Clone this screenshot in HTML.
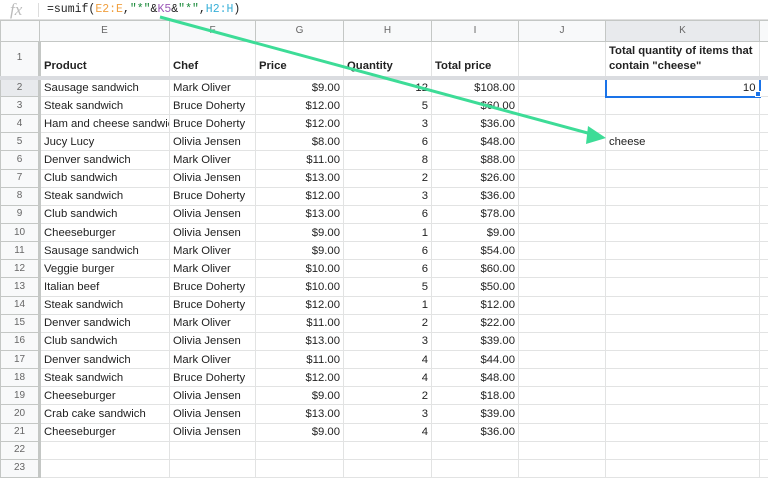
<!DOCTYPE html>
<html><head><meta charset="utf-8"><style>
*{margin:0;padding:0;box-sizing:border-box}
body{width:768px;height:472px;overflow:hidden;background:#fff;font-family:"Liberation Sans",Arial,sans-serif;font-size:11.3px;color:#222;position:relative}
.fb{position:absolute;left:0;top:0;width:768px;height:20px;border-bottom:1px solid #e0e0e0;background:#fff}
.fx{position:absolute;left:10px;top:0;font-family:"Liberation Serif",serif;font-style:italic;color:#bbb;font-size:17px}
.fsep{position:absolute;left:38px;top:3px;width:1px;height:14px;background:#ddd}
.ftxt{position:absolute;left:47px;top:3px;font-family:"Liberation Mono",monospace;font-size:11.5px;color:#222}
table{position:absolute;left:0;top:20px;border-collapse:collapse;table-layout:fixed;width:789px}
td{border:1px solid #e2e3e3;padding:0 3px;white-space:nowrap;overflow:hidden;height:18.15px;line-height:16px}
td.rn{background:#f8f9fa;color:#666;text-align:center;font-size:10px;border-right:3px solid #c4c7c5;border-color:#c4c7c5}
tr.hd td{background:#f8f9fa;color:#666;text-align:center;font-size:10px;height:21px;border-color:#c4c7c5}
tr.r1 td{height:36px;vertical-align:bottom;font-weight:bold;padding-bottom:2px;line-height:15px;border-bottom:4px solid #dadce0}
.r{text-align:right}
</style></head><body>
<div class="fb"><span class="fx">fx</span><div class="fsep"></div><div class="ftxt">=sumif(<span style="color:#f0a040">E2:E</span>,<span style="color:#1a8a3a">"*"</span>&amp;<span style="color:#9c5ab8">K5</span>&amp;<span style="color:#1a8a3a">"*"</span>,<span style="color:#3ab0d8">H2:H</span>)</div></div>
<table>
<colgroup><col style="width:39px"><col style="width:130px"><col style="width:86px"><col style="width:88px"><col style="width:88px"><col style="width:87px"><col style="width:87px"><col style="width:154px"><col style="width:30px"></colgroup>
<tr class="hd"><td></td><td>E</td><td>F</td><td>G</td><td>H</td><td>I</td><td>J</td><td style="background:#e8eaed">K</td><td></td></tr>
<tr class="r1"><td class="rn" style="vertical-align:middle;font-weight:normal;border-bottom:4px solid #dadce0">1</td><td>Product</td><td>Chef</td><td>Price</td><td>Quantity</td><td>Total price</td><td></td><td style="white-space:normal">Total quantity of items that contain "cheese"</td><td></td></tr>
<tr><td class="rn" style="background:#e8eaed">2</td><td>Sausage sandwich</td><td>Mark Oliver</td><td class="r">$9.00</td><td class="r">12</td><td class="r">$108.00</td><td></td><td class="r" style="border:2px solid #1a73e8;position:relative">10</td><td></td></tr>
<tr><td class="rn">3</td><td>Steak sandwich</td><td>Bruce Doherty</td><td class="r">$12.00</td><td class="r">5</td><td class="r">$60.00</td><td></td><td></td><td></td></tr>
<tr><td class="rn">4</td><td style="text-overflow:clip">Ham and cheese sandwich</td><td>Bruce Doherty</td><td class="r">$12.00</td><td class="r">3</td><td class="r">$36.00</td><td></td><td></td><td></td></tr>
<tr><td class="rn">5</td><td>Jucy Lucy</td><td>Olivia Jensen</td><td class="r">$8.00</td><td class="r">6</td><td class="r">$48.00</td><td></td><td>cheese</td><td></td></tr>
<tr><td class="rn">6</td><td>Denver sandwich</td><td>Mark Oliver</td><td class="r">$11.00</td><td class="r">8</td><td class="r">$88.00</td><td></td><td></td><td></td></tr>
<tr><td class="rn">7</td><td>Club sandwich</td><td>Olivia Jensen</td><td class="r">$13.00</td><td class="r">2</td><td class="r">$26.00</td><td></td><td></td><td></td></tr>
<tr><td class="rn">8</td><td>Steak sandwich</td><td>Bruce Doherty</td><td class="r">$12.00</td><td class="r">3</td><td class="r">$36.00</td><td></td><td></td><td></td></tr>
<tr><td class="rn">9</td><td>Club sandwich</td><td>Olivia Jensen</td><td class="r">$13.00</td><td class="r">6</td><td class="r">$78.00</td><td></td><td></td><td></td></tr>
<tr><td class="rn">10</td><td>Cheeseburger</td><td>Olivia Jensen</td><td class="r">$9.00</td><td class="r">1</td><td class="r">$9.00</td><td></td><td></td><td></td></tr>
<tr><td class="rn">11</td><td>Sausage sandwich</td><td>Mark Oliver</td><td class="r">$9.00</td><td class="r">6</td><td class="r">$54.00</td><td></td><td></td><td></td></tr>
<tr><td class="rn">12</td><td>Veggie burger</td><td>Mark Oliver</td><td class="r">$10.00</td><td class="r">6</td><td class="r">$60.00</td><td></td><td></td><td></td></tr>
<tr><td class="rn">13</td><td>Italian beef</td><td>Bruce Doherty</td><td class="r">$10.00</td><td class="r">5</td><td class="r">$50.00</td><td></td><td></td><td></td></tr>
<tr><td class="rn">14</td><td>Steak sandwich</td><td>Bruce Doherty</td><td class="r">$12.00</td><td class="r">1</td><td class="r">$12.00</td><td></td><td></td><td></td></tr>
<tr><td class="rn">15</td><td>Denver sandwich</td><td>Mark Oliver</td><td class="r">$11.00</td><td class="r">2</td><td class="r">$22.00</td><td></td><td></td><td></td></tr>
<tr><td class="rn">16</td><td>Club sandwich</td><td>Olivia Jensen</td><td class="r">$13.00</td><td class="r">3</td><td class="r">$39.00</td><td></td><td></td><td></td></tr>
<tr><td class="rn">17</td><td>Denver sandwich</td><td>Mark Oliver</td><td class="r">$11.00</td><td class="r">4</td><td class="r">$44.00</td><td></td><td></td><td></td></tr>
<tr><td class="rn">18</td><td>Steak sandwich</td><td>Bruce Doherty</td><td class="r">$12.00</td><td class="r">4</td><td class="r">$48.00</td><td></td><td></td><td></td></tr>
<tr><td class="rn">19</td><td>Cheeseburger</td><td>Olivia Jensen</td><td class="r">$9.00</td><td class="r">2</td><td class="r">$18.00</td><td></td><td></td><td></td></tr>
<tr><td class="rn">20</td><td>Crab cake sandwich</td><td>Olivia Jensen</td><td class="r">$13.00</td><td class="r">3</td><td class="r">$39.00</td><td></td><td></td><td></td></tr>
<tr><td class="rn">21</td><td>Cheeseburger</td><td>Olivia Jensen</td><td class="r">$9.00</td><td class="r">4</td><td class="r">$36.00</td><td></td><td></td><td></td></tr>
<tr><td class="rn">22</td><td></td><td></td><td></td><td></td><td></td><td></td><td></td><td></td></tr>
<tr><td class="rn">23</td><td></td><td></td><td></td><td></td><td></td><td></td><td></td><td></td></tr>
</table>
<div style="position:absolute;left:755px;top:91px;width:6px;height:6px;background:#1a73e8;border:1px solid #fff"></div>
<svg style="position:absolute;left:0;top:0" width="768" height="472">
<line x1="160" y1="17" x2="595" y2="135" stroke="#3ddc97" stroke-width="3"/>
<polygon points="606,138 588,126 586,144" fill="#3ddc97"/>
</svg>
</body></html>
